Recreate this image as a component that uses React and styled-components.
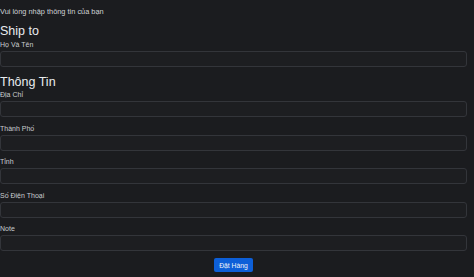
import React from "react";
import styled, { createGlobalStyle } from "styled-components";

const Global = createGlobalStyle`
  html, body { margin: 0; padding: 0; background: #1b1c1f; }
  body { font-family: "Liberation Sans", Arial, sans-serif; color: #dee2e6; }
`;

const Page = styled.div`
  width: 467px;
  padding-top: 7px;
  display: flex;
  flex-direction: column;
`;

const Intro = styled.p`
  margin: 0;
  font-size: 7.4px;
  line-height: 10px;
  color: #d0d3d6;
`;

const Heading = styled.h2`
  margin: ${p => p.$top}px 0 0;
  font-size: 12.5px;
  line-height: 16px;
  font-weight: 500;
  color: #e9ecef;
`;

const Field = styled.div`
  display: flex;
  flex-direction: column;
  margin-top: ${p => p.$top ?? 6.5}px;
`;

const Label = styled.label`
  font-size: 7px;
  line-height: 9px;
  color: #c9ccd0;
`;

const Input = styled.input`
  box-sizing: border-box;
  margin: 2px 0 0;
  width: 100%;
  height: 16px;
  background: #1d1e21;
  border: 1px solid #33353a;
  border-radius: 3px;
  outline: none;
  color: #dee2e6;
  font-size: 7px;
  padding: 0 4px;
`;

const Actions = styled.div`
  display: flex;
  justify-content: center;
  margin-top: 7px;
`;

const Button = styled.button`
  background: #0d5fd8;
  color: #f1f4f8;
  border: none;
  border-radius: 2px;
  font-family: inherit;
  font-size: 6.8px;
  height: 14px;
  padding: 0 5px;
`;

const fields = ["Địa Chỉ", "Thành Phố", "Tỉnh", "Số Điện Thoại", "Note"];

export default function App() {
  return (
    <>
      <Global />
      <Page>
        <Intro>Vui lòng nhập thông tin của bạn</Intro>
        <Heading $top={6}>Ship to</Heading>
        <Field $top={0.5}>
          <Label>Họ Và Tên</Label>
          <Input />
        </Field>
        <Heading $top={7}>Thông Tin</Heading>
        {fields.map((f, i) => (
          <Field key={f} $top={i === 0 ? 0.5 : 6.5}>
            <Label>{f}</Label>
            <Input />
          </Field>
        ))}
        <Actions>
          <Button>Đặt Hàng</Button>
        </Actions>
      </Page>
    </>
  );
}
